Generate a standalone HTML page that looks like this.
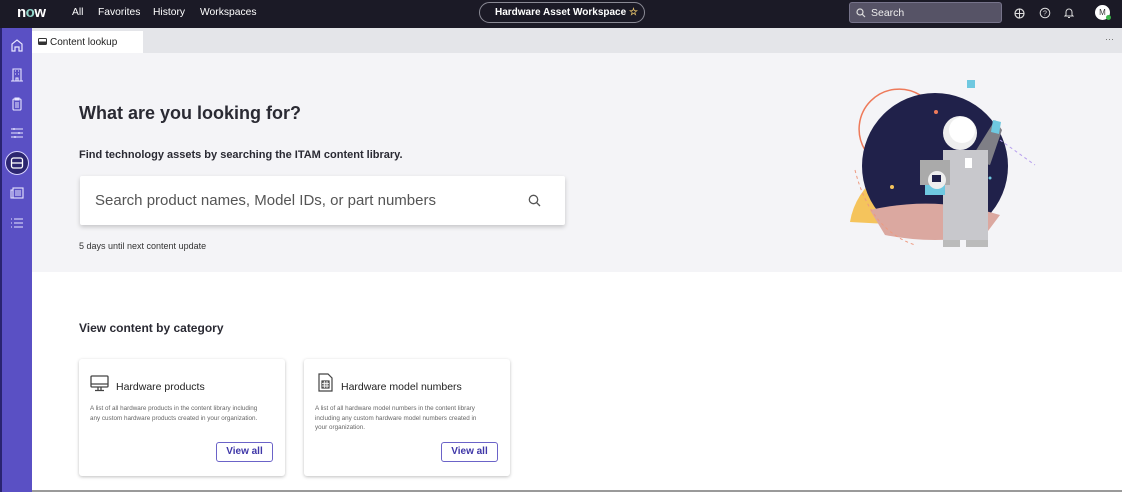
<!DOCTYPE html>
<html><head><meta charset="utf-8"><style>
*{margin:0;padding:0;box-sizing:border-box}
body{width:1122px;height:492px;overflow:hidden;font-family:"Liberation Sans",sans-serif;background:#fff;position:relative}
.top{position:absolute;left:0;top:0;width:1122px;height:28px;background:#1b1a26;color:#fff}
.top .nav{position:absolute;top:7px;font-size:10.3px}
.side{position:absolute;left:0;top:28px;width:32px;height:464px;background:#5a50c4;border-left:2px solid #2a2470}
.side svg{position:absolute;left:8px}
.tabs{position:absolute;left:32px;top:28px;width:1090px;height:25px;background:#e4e5e9}
.tab{position:absolute;left:0;top:3px;width:111px;height:22px;background:#fff;font-size:10px;color:#222;padding:6px 0 0 18px}
.hero{position:absolute;left:32px;top:53px;width:1090px;height:219px;background:#f4f4f7}
.card{position:absolute;top:359px;width:206px;height:117px;background:#fff;border-radius:3px;box-shadow:0 1px 3px rgba(0,0,0,.25)}
.card h3{position:absolute;left:37px;top:22px;font-size:10.5px;font-weight:normal;color:#222}
.card p{position:absolute;left:11px;top:45px;width:172px;font-size:6.3px;line-height:9.5px;color:#666}
.card .btn{position:absolute;right:12px;top:83px;width:57px;height:20px;border:1px solid #6b63c8;border-radius:3px;color:#3f37a8;font-size:10px;font-weight:bold;text-align:center;line-height:18px}
</style></head><body>
<div class="top">
<div style="position:absolute;left:17px;top:4px;font-size:15px;font-weight:bold;letter-spacing:-0.5px">n<span style="color:#8fd3c8">o</span>w</div>
<div class="nav" style="left:72px">All</div>
<div class="nav" style="left:98px">Favorites</div>
<div class="nav" style="left:153px">History</div>
<div class="nav" style="left:200px">Workspaces</div>
<div style="position:absolute;left:479px;top:2px;width:166px;height:21px;border:1px solid #8a8a95;border-radius:11px;font-size:10px;font-weight:bold;padding:4px 0 0 15px">Hardware Asset Workspace <span style="color:#e8c46c">☆</span></div>
<div style="position:absolute;left:849px;top:2px;width:153px;height:21px;background:#565366;border:1px solid #76738a;border-radius:3px;font-size:10.5px;color:#eee;padding:4px 0 0 21px">Search
<svg style="position:absolute;left:6px;top:5px" width="10" height="10" viewBox="0 0 10 10"><circle cx="4" cy="4" r="3" fill="none" stroke="#ddd" stroke-width="1.2"/><path d="M6.3 6.3L9 9" stroke="#ddd" stroke-width="1.2"/></svg></div>
<svg style="position:absolute;left:1014px;top:8px" width="11" height="11" viewBox="0 0 11 11"><circle cx="5.5" cy="5.5" r="4.5" fill="none" stroke="#ddd" stroke-width="1.2"/><path d="M1 5.5h9M5.5 1v9" stroke="#ddd"/></svg>
<svg style="position:absolute;left:1039px;top:7px" width="12" height="12" viewBox="0 0 12 12"><circle cx="6" cy="6" r="4.8" fill="none" stroke="#ddd" stroke-width="1"/><text x="6" y="8.5" font-size="7" fill="#ddd" text-anchor="middle" font-family="Liberation Sans">?</text></svg>
<svg style="position:absolute;left:1064px;top:7px" width="10" height="12" viewBox="0 0 10 12"><path d="M2 8V5a3 3 0 0 1 6 0v3l1 1H1z" fill="none" stroke="#ddd"/><path d="M4 10.5h2" stroke="#ddd"/></svg>
<div style="position:absolute;left:1095px;top:5px;width:15px;height:15px;border-radius:50%;background:#fff;color:#333;font-size:8px;text-align:center;line-height:15px">M</div>
<div style="position:absolute;left:1106px;top:15px;width:5px;height:5px;border-radius:50%;background:#3bb54a"></div>
</div>
<div class="side">
<svg style="top:10px" width="14" height="14" viewBox="0 0 14 14" fill="none" stroke="#e8e6ff" stroke-width="1.2"><path d="M2 13V6l5-4 5 4v7H9V9H5v4z"/></svg>
<svg style="top:40px" width="14" height="14" viewBox="0 0 14 14" fill="none" stroke="#e8e6ff" stroke-width="1.1"><path d="M3 13V1h8v12M1 13h12M5 3h1M8 3h1M5 6h1M8 6h1M6 13v-3h2v3"/></svg>
<svg style="top:69px" width="14" height="14" viewBox="0 0 14 14" fill="none" stroke="#e8e6ff" stroke-width="1.1"><rect x="3" y="2" width="8" height="11" rx="1"/><path d="M5 1h4v2H5zM5 6h4M5 8h4M5 10h4"/></svg>
<svg style="top:98px" width="14" height="14" viewBox="0 0 14 14" fill="none" stroke="#e8e6ff" stroke-width="1.1"><path d="M1 3h12M1 7h12M1 11h12"/><path d="M4 2v2M9 6v2M5 10v2"/></svg>
<div style="position:absolute;left:3px;top:123px;width:24px;height:24px;border-radius:50%;background:#2c2670;border:1.5px solid #d8d4ff"></div>
<svg style="top:129px" width="14" height="12" viewBox="0 0 14 12" fill="none" stroke="#fff" stroke-width="1.3"><rect x="1.5" y="1" width="11" height="10" rx="2"/><path d="M1.5 6h11"/></svg>
<svg style="top:158px" width="14" height="14" viewBox="0 0 14 14" fill="none" stroke="#e8e6ff" stroke-width="1.1"><rect x="3" y="2" width="10" height="10"/><path d="M3 4H1v8h2M5 5h6M5 7h6M5 9h6"/></svg>
<svg style="top:189px" width="14" height="12" viewBox="0 0 14 12" fill="none" stroke="#e8e6ff" stroke-width="1.1"><path d="M1 2h1M1 6h1M1 10h1M4 2h9M4 6h9M4 10h9"/></svg>
</div>
<div class="tabs"><div class="tab"><svg style="position:absolute;left:6px;top:7px" width="9" height="7" viewBox="0 0 9 7"><rect x="0.5" y="0.5" width="8" height="6" rx="1" fill="none" stroke="#333"/><rect x="0.5" y="3.5" width="8" height="3" fill="#333"/></svg>Content lookup</div>
<div style="position:absolute;right:8px;top:6px;font-size:9px;color:#666">···</div></div>
<div class="hero">
<div style="position:absolute;left:47px;top:50px;font-size:18px;font-weight:bold;color:#2a2a33">What are you looking for?</div>
<div style="position:absolute;left:47px;top:96px;font-size:11px;font-weight:bold;color:#2a2a33">Find technology assets by searching the ITAM content library.</div>
<div style="position:absolute;left:48px;top:123px;width:485px;height:49px;background:#fff;box-shadow:0 2px 5px rgba(0,0,0,.2);border-radius:2px">
<div style="position:absolute;left:15px;top:16px;font-size:15px;color:#555">Search product names, Model IDs, or part numbers</div>
<svg style="position:absolute;left:448px;top:18px" width="13" height="13" viewBox="0 0 13 13" fill="none" stroke="#555" stroke-width="1.3"><circle cx="5.5" cy="5.5" r="4.2"/><path d="M8.5 8.5L12 12"/></svg></div>
<div style="position:absolute;left:47px;top:188px;font-size:9px;color:#333">5 days until next content update</div>
<svg style="position:absolute;left:798px;top:17px" width="220" height="190" viewBox="830 70 220 190">
<rect x="967" y="80" width="8" height="8" fill="#6fc8e0"/>
<path d="M865 150 A40 40 0 0 1 920 95" fill="none" stroke="#ee7a5a" stroke-width="1.5"/>
<path d="M850 222 A70 70 0 0 1 880 175 L905 225z" fill="#f5c45c"/>
<circle cx="935" cy="166" r="73" fill="#20214a"/>
<path d="M870 210 Q935 195 1000 215 L985 235 Q935 245 885 235z" fill="#dba8a0"/>
<circle cx="936" cy="112" r="2" fill="#ee7a5a"/><circle cx="892" cy="187" r="2" fill="#f5c45c"/><circle cx="980" cy="203" r="2" fill="#a77be0"/><circle cx="990" cy="178" r="1.5" fill="#6fc8e0"/>
<path d="M1000 140 L1035 165" stroke="#b8a0ee" stroke-dasharray="3 3"/>
<path d="M855 170 Q870 230 915 245" fill="none" stroke="#ee9a80" stroke-dasharray="3 3"/>
<path d="M995 120 L1002 130 L990 165 L970 160z" fill="#7f7f86"/><path d="M993 120l8 2-2 12-8-2z" fill="#6fc8e0"/>
<rect x="943" y="150" width="45" height="90" fill="#c8c8cc"/>
<rect x="925" y="165" width="20" height="30" fill="#6fc8e0"/>
<rect x="920" y="160" width="30" height="25" fill="#aaa"/>
<circle cx="937" cy="180" r="9" fill="#eee"/><rect x="932" y="175" width="9" height="7" fill="#20214a"/>
<circle cx="960" cy="133" r="17" fill="#eee"/><circle cx="962" cy="130" r="13" fill="#fff"/>
<rect x="965" y="158" width="7" height="10" fill="#fff"/>
<path d="M943 240 v7 h17 v-7M966 240 v7 h22 v-7" fill="#bbb"/>
</svg>
</div>
<div style="position:absolute;left:79px;top:321px;font-size:12px;font-weight:bold;color:#2a2a33">View content by category</div>
<div class="card" style="left:79px">
<svg style="position:absolute;left:11px;top:16px" width="19" height="17" viewBox="0 0 19 17" fill="none" stroke="#444" stroke-width="1.3"><rect x="1" y="1" width="17" height="11" rx="1"/><path d="M1 9h17M8 12v3M11 12v3M5 15.5h9"/></svg>
<h3>Hardware products</h3>
<p>A list of all hardware products in the content library including any custom hardware products created in your organization.</p>
<div class="btn">View all</div></div>
<div class="card" style="left:304px">
<svg style="position:absolute;left:14px;top:14px" width="15" height="19" viewBox="0 0 15 19" fill="none" stroke="#444" stroke-width="1.2"><path d="M1 1h9l4 4v13H1z"/><rect x="4" y="8" width="7" height="7" fill="#888"/><path d="M4 10.5h7M4 13h7M6.5 8v7M9 8v7" stroke="#fff" stroke-width=".7"/></svg>
<h3>Hardware model numbers</h3>
<p>A list of all hardware model numbers in the content library including any custom hardware model numbers created in your organization.</p>
<div class="btn">View all</div></div>
<div style="position:absolute;left:32px;top:490px;width:1090px;height:2px;background:#9a9a9a"></div>
</body></html>
